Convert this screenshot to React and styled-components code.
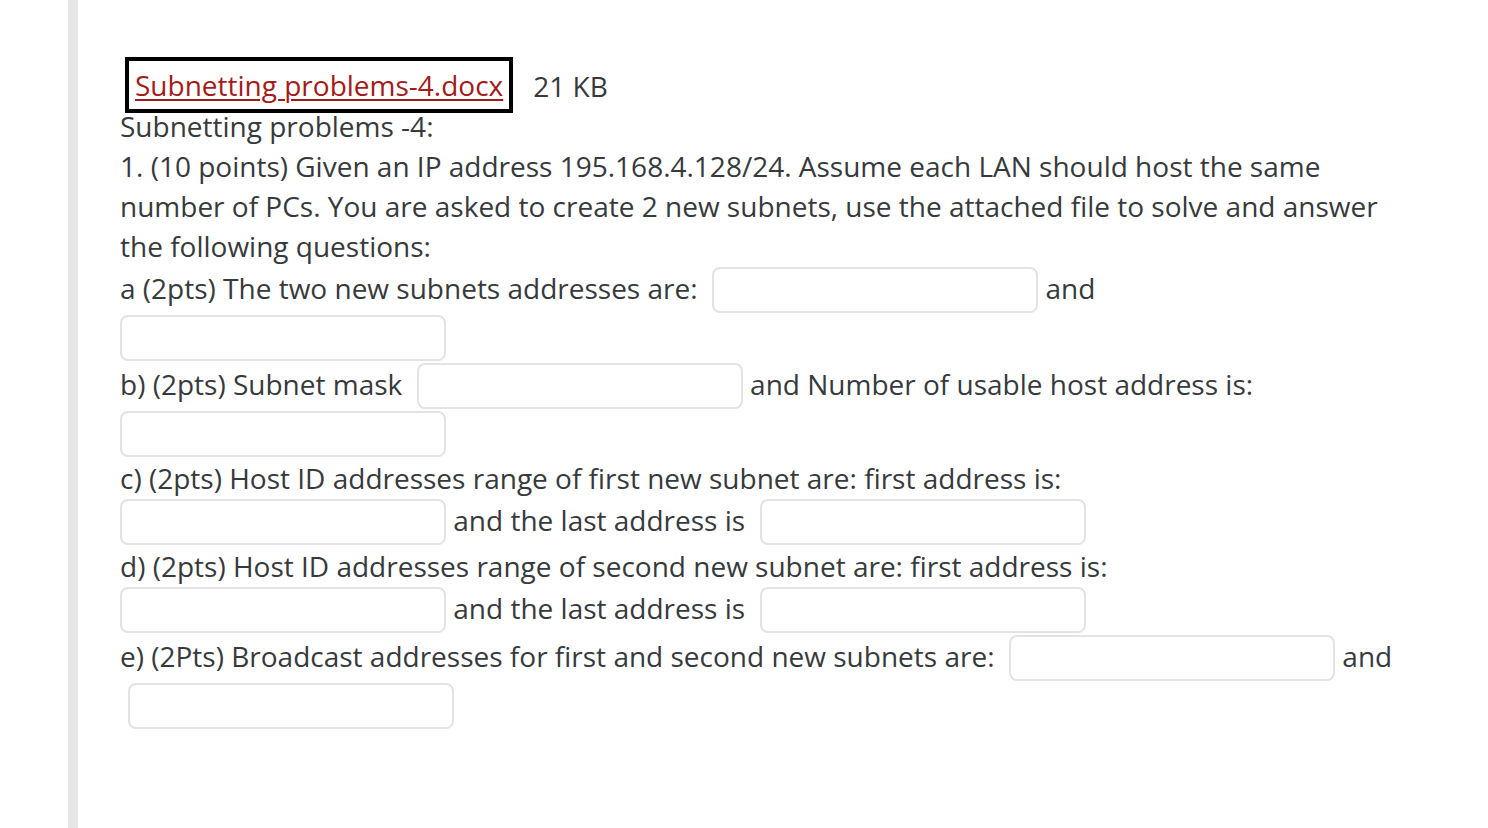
import React from "react";
import styled, { createGlobalStyle } from "styled-components";

const Global = createGlobalStyle`
  html, body { margin: 0; padding: 0; background: #fff; }
  body { font-family: "Open Sans", "Liberation Sans", sans-serif; color: #373a3c; }
`;

const Page = styled.div`
  display: flex;
  min-height: 828px;
  background: #fff;
`;

const SideBar = styled.div`
  width: 10px;
  margin-left: 68px;
  background: #e6e6e6;
  flex-shrink: 0;
`;

const Content = styled.div`
  padding: 66px 0 0 42px;
  width: 1278px;
  font-size: 28px;
  line-height: 40px;
`;

const FileRow = styled.div`
  display: flex;
  align-items: center;
  height: 40px;
  gap: 30px;
  padding-left: 15px;
`;

const FileLink = styled.a`
  color: #a31b1b;
  text-decoration: underline;
  text-underline-offset: 3px;
  text-decoration-thickness: 2px;
  padding: 0 2px;
  margin: -2px 0 0 -2px;
  outline: 4px solid #000;
  outline-offset: 4px;
`;

const Size = styled.span`
  color: #373a3c;
  margin-left: -2px;
`;

const Text = styled.div`
  margin: 0;
`;

const Field = styled.input`
  box-sizing: border-box;
  display: inline-block;
  width: 326px;
  height: 46px;
  margin: 1px 0 1px ${(p) => (p.$indent ? "8px" : "0")};
  border: 2px solid #e3e3e3;
  border-radius: 8px;
  background: #fff;
  vertical-align: -2px;
  font: inherit;
  padding: 0 10px;
  outline: none;
`;

export default function App() {
  return (
    <>
      <Global />
      <Page>
        <SideBar />
        <Content>
          <FileRow>
            <FileLink href="#">Subnetting problems-4.docx</FileLink>
            <Size>21 KB</Size>
          </FileRow>
          <Text>Subnetting problems -4:</Text>
          <Text>
            1. (10 points) Given an IP address 195.168.4.128/24. Assume each LAN should host the same
            number of PCs. You are asked to create 2 new subnets, use the attached file to solve and
            answer the following questions:
          </Text>
          <Text>
            a (2pts) The two new subnets addresses are:&nbsp; <Field /> and <Field />
          </Text>
          <Text>
            b) (2pts) Subnet mask&nbsp; <Field /> and Number of usable host address is:&nbsp; <Field />
          </Text>
          <Text>
            c) (2pts) Host ID addresses range of first new subnet are: first address is:&nbsp; <Field />{" "}
            and the last address is&nbsp; <Field />
          </Text>
          <Text>
            d) (2pts) Host ID addresses range of second new subnet are: first address is:&nbsp; <Field />{" "}
            and the last address is&nbsp; <Field />
          </Text>
          <Text>
            e) (2Pts) Broadcast addresses for first and second new subnets are:&nbsp; <Field /> and{" "}
            <Field $indent />
          </Text>
        </Content>
      </Page>
    </>
  );
}
